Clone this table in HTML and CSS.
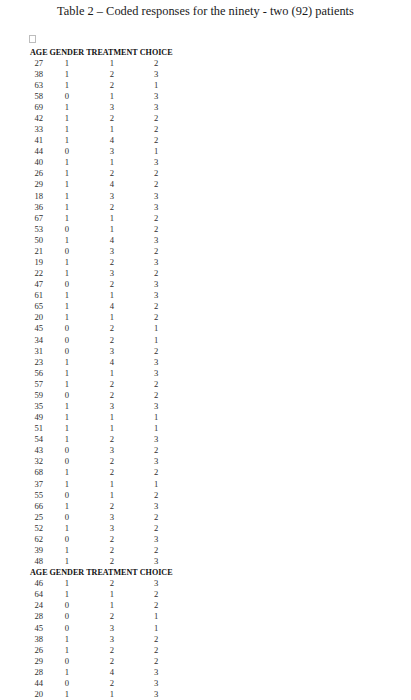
FILE: index.html
```html
<!DOCTYPE html>
<html lang="en">
<head>
<meta charset="utf-8">
<title>Table 2 – Coded responses</title>
<link rel="stylesheet" href="styles.css">
</head>
<body>
<h1 class="title">Table 2 – Coded responses for the ninety - two (92) patients</h1>
<div class="sheet">
  <span class="checkbox"></span>
  <table class="data">
    <tbody id="rows"></tbody>
  </table>
</div>
<script src="app.js"></script>
</body>
</html>
```
FILE: styles.css
```css
html, body {
  margin: 0;
  padding: 0;
  background: #ffffff;
}
body {
  font-family: "Liberation Serif", "Times New Roman", serif;
  color: #222222;
}
.title {
  margin: 0;
  padding-top: 4px;
  font-size: 12.4px;
  line-height: 14px;
  font-weight: normal;
  text-align: center;
  color: #1a1a1a;
}
.sheet {
  padding-left: 29px;
}
.checkbox {
  display: block;
  width: 5px;
  height: 6px;
  margin-top: 17px;
  border: 1px solid #bdbdbd;
}
.data {
  margin-top: 3.5px;
  border-collapse: collapse;
  border-spacing: 0;
}
.data td {
  padding: 0 1px;
  text-align: center;
  font-size: 8.6px;
  line-height: 11.08px;
  height: 11.08px;
  color: #2e2e2e;
}
.data tr.head td {
  font-weight: bold;
  font-size: 8.1px;
  color: #111111;
  padding: 0 1px;
}
```
FILE: app.js
```js
var block1 = [
  [27,1,1,2],[38,1,2,3],[63,1,2,1],[58,0,1,3],[69,1,3,3],[42,1,2,2],[33,1,1,2],[41,1,4,2],
  [44,0,3,1],[40,1,1,3],[26,1,2,2],[29,1,4,2],[18,1,3,3],[36,1,2,3],[67,1,1,2],[53,0,1,2],
  [50,1,4,3],[21,0,3,2],[19,1,2,3],[22,1,3,2],[47,0,2,3],[61,1,1,3],[65,1,4,2],[20,1,1,2],
  [45,0,2,1],[34,0,2,1],[31,0,3,2],[23,1,4,3],[56,1,1,3],[57,1,2,2],[59,0,2,2],[35,1,3,3],
  [49,1,1,1],[51,1,1,1],[54,1,2,3],[43,0,3,2],[32,0,2,3],[68,1,2,2],[37,1,1,1],[55,0,1,2],
  [66,1,2,3],[25,0,3,2],[52,1,3,2],[62,0,2,3],[39,1,2,2],[48,1,2,3]
];
var block2 = [
  [46,1,2,3],[64,1,1,2],[24,0,1,2],[28,0,2,1],[45,0,3,1],[38,1,3,2],[26,1,2,2],[29,0,2,2],
  [28,1,4,3],[44,0,2,3],[20,1,1,3]
];
var heads = ["AGE","GENDER","TREATMENT","CHOICE"];
var tbody = document.getElementById("rows");
function addRow(cells, cls) {
  var tr = document.createElement("tr");
  if (cls) tr.className = cls;
  cells.forEach(function (c) {
    var td = document.createElement("td");
    td.textContent = c;
    tr.appendChild(td);
  });
  tbody.appendChild(tr);
}
addRow(heads, "head");
block1.forEach(function (r) { addRow(r); });
addRow(heads, "head");
block2.forEach(function (r) { addRow(r); });
```
